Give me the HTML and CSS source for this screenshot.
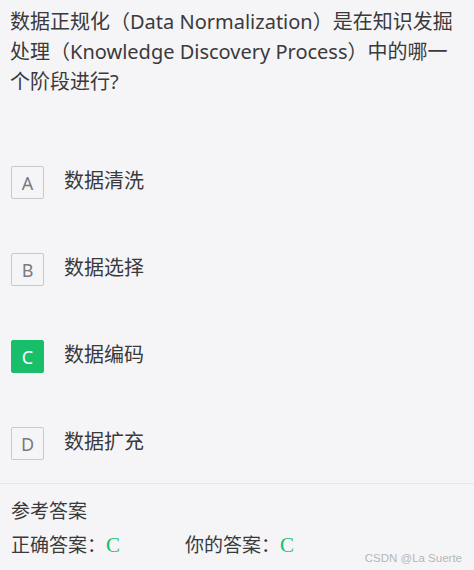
FILE: index.html
```html
<!DOCTYPE html>
<html lang="zh-CN">
<head>
    <meta charset="UTF-8">
    <meta name="viewport" content="width=device-width, initial-scale=1.0">
    <title>单选题</title>
    <link rel="stylesheet" href="styles.css">
</head>
<body>
    <div class="page">
        <p class="question">数据正规化（Data Normalization）是在知识发掘处理（Knowledge Discovery Process）中的哪一个阶段进行?</p>

        <ul class="options">
            <li class="option">
                <span class="letter">A</span>
                <span class="label">数据清洗</span>
            </li>
            <li class="option">
                <span class="letter">B</span>
                <span class="label">数据选择</span>
            </li>
            <li class="option">
                <span class="letter selected">C</span>
                <span class="label">数据编码</span>
            </li>
            <li class="option">
                <span class="letter">D</span>
                <span class="label">数据扩充</span>
            </li>
        </ul>

        <div class="answer">
            <div class="answer-title">参考答案</div>
            <div class="answer-row">
                <span class="answer-item">正确答案：<b class="answer-value">C</b></span>
                <span class="answer-item">你的答案：<b class="answer-value">C</b></span>
            </div>
            <span class="watermark">CSDN @La Suerte</span>
        </div>
    </div>
</body>
</html>
```

FILE: styles.css
```css
* {
    margin: 0;
    padding: 0;
    box-sizing: border-box;
}

body {
    font-family: 'Noto Sans', 'Noto Sans CJK SC', sans-serif;
    color: #3a3a3c;
    background-color: #f5f5f7;
}

.page {
    position: relative;
    width: 474px;
    height: 570px;
    overflow: hidden;
}

.question {
    padding: 7px 8px 0 10px;
    font-size: 20px;
    line-height: 30px;
}

.options {
    list-style: none;
    display: flex;
    flex-direction: column;
    gap: 54px;
    padding: 69px 11px 23px;
}

.option {
    display: flex;
    align-items: center;
    gap: 20px;
    height: 33px;
}

.letter {
    width: 33px;
    height: 33px;
    display: flex;
    align-items: center;
    justify-content: center;
    border: 1px solid #c9c9cc;
    border-radius: 2px;
    color: #7a7a7e;
    font-size: 18px;
}

.letter.selected {
    background: #19be6b;
    border-color: #19be6b;
    color: #fff;
}

.label {
    font-size: 20px;
    line-height: 24px;
    padding-bottom: 4px;
}

.answer {
    border-top: 1px solid #e6e6e9;
    padding: 10px 11px 0;
    font-size: 19px;
    line-height: 34px;
}

.answer-row {
    display: flex;
}

.answer-item {
    width: 174px;
}

.answer-value {
    font-family: 'Liberation Serif', serif;
    font-weight: normal;
    font-size: 21px;
    color: #19be6b;
}

.watermark {
    position: absolute;
    right: 12px;
    bottom: 5px;
    font-family: 'Liberation Sans', Arial, sans-serif;
    font-size: 11.5px;
    line-height: 14px;
    color: #b5b5b8;
}
```
